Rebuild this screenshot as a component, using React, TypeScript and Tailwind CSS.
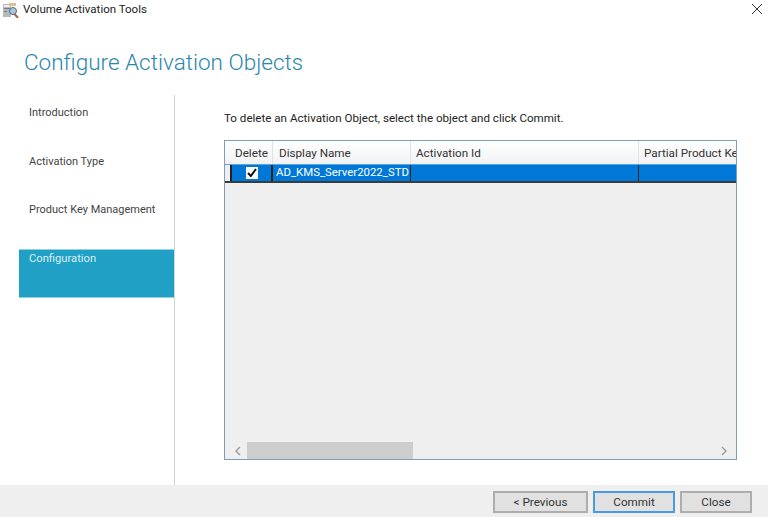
const font = "[font-family:'Roboto','Noto_Sans',sans-serif]";

function NavItem({ label, active }: { label: string; active?: boolean }) {
  return (
    <div
      className={
        active
          ? "h-[49px] pl-[10px] pt-[1px] text-[11.2px] leading-[16px] bg-[#1fa0c4] text-[#d8f0f6] border-y border-[#8fd0e2]"
          : "h-[48.5px] pl-[10px] pt-[1px] text-[11px] leading-[16px] text-[#444444]"
      }
    >
      {label}
    </div>
  );
}

function HeaderCell({ label, className }: { label: string; className: string }) {
  return (
    <div className={`shrink-0 h-full border-r border-[#dfe3e8] pt-[1px] text-[11.7px] leading-[22px] text-[#333333] overflow-hidden whitespace-nowrap ${className}`}>
      {label}
    </div>
  );
}

function Btn({ label, className }: { label: string; className: string }) {
  return (
    <button className={`h-[22px] bg-[#e1e1e1] border-2 text-[11.7px] leading-[16px] text-[#333333] ${className}`}>
      {label}
    </button>
  );
}

export default function App() {
  return (
    <div className={`w-[768px] h-[517px] bg-white flex flex-col overflow-hidden ${font}`}>
      <div className="h-[17px] flex items-center pl-[3px] shrink-0">
        <svg width="17" height="15" viewBox="0 0 17 15" className="shrink-0 mt-[3px]">
          <rect x="0" y="1" width="8" height="13" fill="#b4b9bd" />
          <rect x="1" y="2" width="6" height="2" fill="#eef0f2" />
          <rect x="1" y="5" width="6" height="1" fill="#757c82" />
          <rect x="1" y="8" width="3" height="1" fill="#757c82" />
          <rect x="6" y="0" width="7" height="3" fill="#d8c28a" />
          <circle cx="10" cy="8" r="3.5" fill="#a9c8de" stroke="#54677a" />
          <path d="M11.5 11l3.5 4" stroke="#a8643c" strokeWidth="2" />
        </svg>
        <span className="ml-[3px] text-[11.5px] leading-[16px] text-[#222222]">Volume Activation Tools</span>
        <svg width="12" height="12" viewBox="0 0 12 12" className="ml-auto mr-[5px] mt-[1px]">
          <path d="M1 1l10 10M11 1L1 11" stroke="#333333" strokeWidth="1" fill="none" />
        </svg>
      </div>
      <div className="h-[78px] shrink-0 pl-[24px] pt-[27px] text-[22.5px] leading-[36px] font-light text-[#2b86ad]">
        Configure Activation Objects
      </div>
      <div className="flex-1 flex min-h-0">
        <div className="w-[175px] shrink-0 border-r border-[#d4d4d4] pl-[19px] pt-[9px]">
          <NavItem label="Introduction" />
          <NavItem label="Activation Type" />
          <div className="h-[47.5px] pl-[10px] pt-[1px] text-[11px] leading-[16px] text-[#444444]">Product Key Management</div>
          <NavItem label="Configuration" active />
        </div>
        <div className="flex-1 pl-[49px] pt-[15px] min-w-0">
          <div className="text-[11.6px] leading-[16px] text-[#222222]">
            To delete an Activation Object, select the object and click Commit.
          </div>
          <div className="mt-[14px] w-[513px] h-[320px] border border-[#7f9db9] bg-[#efefef] flex flex-col overflow-hidden">
            <div className="h-[23px] shrink-0 flex bg-gradient-to-b from-white to-[#f1f2f4]">
              <HeaderCell label="Delete" className="w-[48px] pl-[10px]" />
              <HeaderCell label="Display Name" className="w-[138px] pl-[6px]" />
              <HeaderCell label="Activation Id" className="w-[228px] pl-[5px]" />
              <HeaderCell label="Partial Product Key" className="w-[97px] pl-[5px] border-r-0" />
            </div>
            <div className="h-[19px] shrink-0 flex bg-[#0078d7] border-t border-[#5aa5e0] border-b-2 border-b-[#3c3c3c]">
              <div className="w-[5px] shrink-0 bg-[#efefef]" />
              <div className="w-[43px] shrink-0 flex items-center justify-center border-x-2 border-[#222222]">
                <div className="w-[12px] h-[12px] bg-white flex items-center justify-center">
                  <svg width="10" height="10" viewBox="0 0 10 10">
                    <path d="M1 5l2.8 3L9 1" stroke="#111111" strokeWidth="2" fill="none" />
                  </svg>
                </div>
              </div>
              <div className="w-[138px] shrink-0 border-r border-[#222222] pl-[3px] text-[11.4px] leading-[15px] text-white whitespace-nowrap">
                AD_KMS_Server2022_STD
              </div>
              <div className="w-[228px] shrink-0 border-r border-[#222222]" />
            </div>
            <div className="flex-1" />
            <div className="h-[17px] shrink-0 flex items-center">
              <svg width="22" height="17" viewBox="0 0 22 17" className="shrink-0">
                <path d="M15 5l-4 4 4 4" stroke="#9a9a9a" strokeWidth="1.4" fill="none" />
              </svg>
              <div className="w-[166px] h-full bg-[#cdcdcd]" />
              <svg width="18" height="17" viewBox="0 0 18 17" className="ml-auto mr-[2px]">
                <path d="M6 5l4 4-4 4" stroke="#9a9a9a" strokeWidth="1.4" fill="none" />
              </svg>
            </div>
          </div>
        </div>
      </div>
      <div className="h-[32px] shrink-0 bg-[#efefef] flex items-start justify-end pt-[6px] pr-[16px] gap-[5px]">
        <Btn label="< Previous" className="w-[95px] border-[#adadad]" />
        <Btn label="Commit" className="w-[82px] border-[#4a9ae0]" />
        <Btn label="Close" className="w-[72px] border-[#adadad]" />
      </div>
    </div>
  );
}
